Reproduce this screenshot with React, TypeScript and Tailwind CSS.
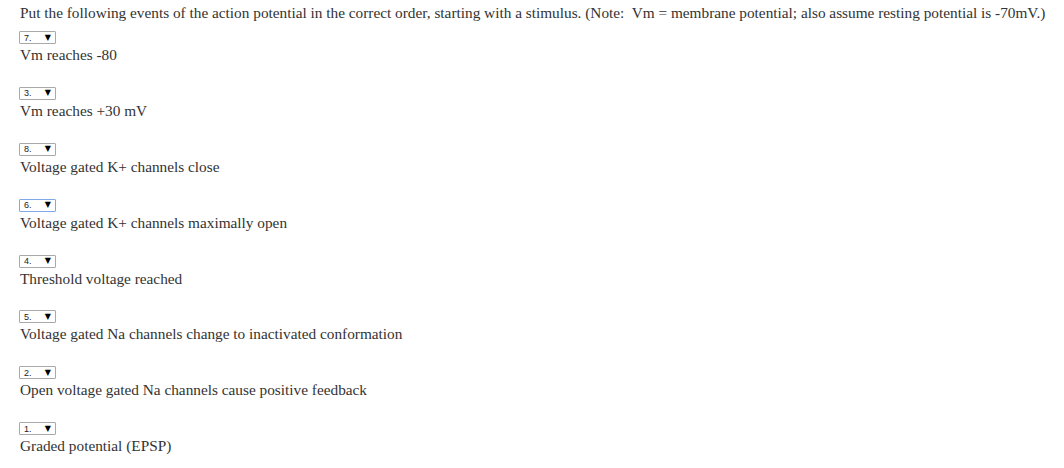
const items: { n: string; label: string; focused?: boolean }[] = [
  { n: "7.", label: "Vm reaches -80" },
  { n: "3.", label: "Vm reaches +30 mV" },
  { n: "8.", label: "Voltage gated K+ channels close" },
  { n: "6.", label: "Voltage gated K+ channels maximally open", focused: true },
  { n: "4.", label: "Threshold voltage reached" },
  { n: "5.", label: "Voltage gated Na channels change to inactivated conformation" },
  { n: "2.", label: "Open voltage gated Na channels cause positive feedback" },
  { n: "1.", label: "Graded potential (EPSP)" },
];

function FakeSelect({ value, focused }: { value: string; focused?: boolean }) {
  return (
    <div
      className={
        "flex items-center w-[37px] h-[13px] bg-white border rounded-[1px] pl-[4px] pr-[4px] justify-between " +
        (focused ? "border-[#7fa8e6]" : "border-[#a9a9a9]")
      }
    >
      <span className="text-[9px] leading-[9px] pt-px text-[#222] font-['Liberation_Sans',sans-serif]">{value}</span>
      <span className="text-[8px] leading-none text-black font-['DejaVu_Sans',sans-serif]">▼</span>
    </div>
  );
}

export default function App() {
  return (
    <div className="w-[1064px] h-[468px] bg-white pl-[19px] pt-[4px] text-[#333] font-['Liberation_Serif',serif] text-[15.3px] leading-[18px]">
      <p className="pl-px">
        Put the following events of the action potential in the correct order, starting with a stimulus. (Note:&nbsp; Vm =
        membrane potential; also assume resting potential is -70mV.)
      </p>
      <div className="mt-[9px] flex flex-col gap-[22.9px]">
        {items.map((it) => (
          <div key={it.n} className="flex flex-col">
            <FakeSelect value={it.n} focused={it.focused} />
            <div className="pl-px mt-[2px]">{it.label}</div>
          </div>
        ))}
      </div>
    </div>
  );
}
